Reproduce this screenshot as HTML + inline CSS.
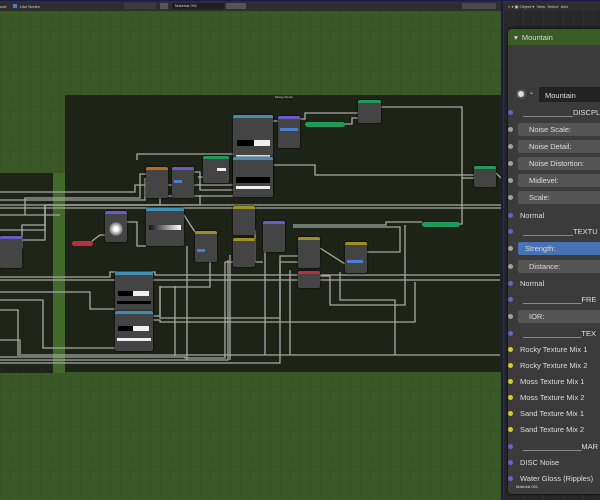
<!DOCTYPE html>
<html><head><meta charset="utf-8"><style>
*{margin:0;padding:0;box-sizing:border-box}
body{width:600px;height:500px;overflow:hidden;background:#3a5926;font-family:"Liberation Sans",sans-serif;position:relative}
.a{position:absolute}
.bg{background-image:linear-gradient(rgba(0,0,0,.05) 1px,transparent 1px),linear-gradient(90deg,rgba(0,0,0,.05) 1px,transparent 1px);background-size:10px 10px}
.n{position:absolute;background:#444;border-radius:2px;box-shadow:0 0 2px #000}
.n i{display:block;height:3px;border-radius:2px 2px 0 0}
.B{background:#3d8fb4}.P{background:#6a5bc4}.G{background:#1f9a58}.O{background:#c2691f}.Y{background:#9b9021}.R{background:#b9303c}
.pill{position:absolute;height:5px;border-radius:3px}
.top{position:absolute;left:0;top:0;width:600px;height:11px;background:#2e2e2e;border-top:1px solid #1c1c4a;font-size:4px;color:#ccc}
.row{position:absolute;left:0;width:100px;height:16px;font-size:7.5px;color:#ddd}
.sock{position:absolute;left:5px;width:5px;height:5px;border-radius:50%;top:5px}
.fld{position:absolute;left:15px;right:0;top:1px;height:13px;background:#545454;border-radius:2px 0 0 2px;padding-left:11px;line-height:13px}
.lbl{position:absolute;left:20px;top:3px;white-space:nowrap}
</style></head><body>
<div class="a bg" style="left:0;top:11px;width:501px;height:489px"></div>
<div class="a" style="left:0;top:173px;width:53px;height:200px;background:#1f2418"></div>
<div class="a" style="left:53px;top:173px;width:12px;height:200px;background:#416a2a"></div>
<div class="a" style="left:65px;top:95px;width:436px;height:277px;background:#1e2318"></div>
<div class="a" style="left:275px;top:95px;font-size:3px;color:#ccc">Mossy Rocks</div>

<svg class="a" style="left:0;top:0" width="501" height="500" fill="none" stroke="#a8a8a8" stroke-width="1.3">
<polyline points="0,192 135,192 135,185 233,185"/>
<polyline points="0,200 145,200 145,178"/>
<polyline points="25,215 25,198 140,198 140,174 146,174"/>
<polyline points="0,230 45,230 45,205 160,205 160,196 233,196"/>
<polyline points="0,248 22,248 22,225 45,225 45,205"/>
<polyline points="22,240 45,240 45,205 200,205 200,195"/>
<polyline points="137,160 137,154 233,154"/>
<polyline points="198,177 203,177"/>
<polyline points="193,172 200,172 200,190 245,190 245,180 233,180"/>
<polyline points="273,121 278,121"/>
<polyline points="273,165 315,165 315,175 474,175"/>
<polyline points="300,119 305,119 305,113 358,113"/>
<polyline points="344,124 352,124 352,118 358,118"/>
<polyline points="380,107 462,107 462,224 460,224"/>
<polyline points="462,178 474,178"/>
<polyline points="496,173 501,178"/>
<polyline points="0,205 501,205"/>
<polyline points="0,208 501,208"/>
<polyline points="92,241 100,235 105,235"/>
<polyline points="127,222 137,222 137,246 146,246"/>
<polyline points="184,215 195,232"/>
<polyline points="293,225 386,225 386,222 422,222"/>
<polyline points="293,227 400,227 400,252 367,252"/>
<polyline points="255,230 255,262 263,262"/>
<polyline points="320,248 345,264"/>
<polyline points="320,276 330,276 330,305 405,305 405,225"/>
<polyline points="0,277 110,277 110,272 155,272 155,275 500,275"/>
<polyline points="0,280 500,280"/>
<polyline points="0,292 90,292 90,309 115,309"/>
<polyline points="0,300 43,300 43,348 115,348"/>
<polyline points="0,310 18,310 18,355 500,355"/>
<polyline points="0,340 20,340 20,354"/>
<polyline points="160,286 160,318 280,318 280,256 298,256"/>
<polyline points="153,316 160,316 160,287 210,287 210,248"/>
<polyline points="175,286 175,356"/>
<polyline points="0,357 185,357 185,358 225,358 225,262 233,262"/>
<polyline points="0,360 228,360 228,260"/>
<polyline points="0,363 280,363 280,262 298,262"/>
<polyline points="187,246 187,360"/>
<polyline points="230,255 230,360"/>
<polyline points="265,250 265,355"/>
<polyline points="290,270 290,355"/>
<polyline points="340,272 340,300 395,300 395,355"/>
<polyline points="153,320 160,320 160,322 415,322 415,282"/>
<polyline points="0,215 60,215"/>
</svg>

<div class="n" style="left:233px;top:115px;width:40px;height:77px"><i class="B"></i>
<div class="a" style="left:4px;top:25px;width:17px;height:6px;background:#000"></div><div class="a" style="left:21px;top:25px;width:16px;height:6px;background:#eee"></div><div class="a" style="left:3px;top:40px;width:34px;height:3px;background:#eee"></div></div>
<div class="n" style="left:278px;top:116px;width:22px;height:32px"><i class="P"></i><div class="a" style="left:2px;top:12px;width:18px;height:3px;background:#4a7fd0"></div></div>
<div class="n" style="left:358px;top:100px;width:23px;height:23px"><i class="G"></i></div>
<div class="pill G" style="left:305px;top:122px;width:40px"></div>
<div class="n" style="left:233px;top:157px;width:40px;height:40px"><i class="B"></i>
<div class="a" style="left:3px;top:20px;width:34px;height:6px;background:#000"></div><div class="a" style="left:3px;top:29px;width:34px;height:3px;background:#eee"></div></div>
<div class="n" style="left:203px;top:156px;width:26px;height:27px"><i class="G"></i><div class="a" style="left:14px;top:12px;width:9px;height:3px;background:#eee"></div></div>
<div class="n" style="left:146px;top:167px;width:22px;height:31px"><i class="O"></i></div>
<div class="n" style="left:172px;top:167px;width:22px;height:31px"><i class="P"></i><div class="a" style="left:2px;top:13px;width:8px;height:3px;background:#4a7fd0"></div></div>
<div class="n" style="left:474px;top:166px;width:22px;height:21px"><i class="G"></i></div>
<div class="n" style="left:105px;top:211px;width:22px;height:31px"><i class="P"></i><div class="a" style="left:4px;top:11px;width:14px;height:14px;border-radius:50%;background:radial-gradient(#fff 20%,#888 60%,#444 75%)"></div></div>
<div class="n" style="left:146px;top:208px;width:38px;height:38px"><i class="B"></i><div class="a" style="left:3px;top:17px;width:32px;height:5px;background:linear-gradient(90deg,#111,#fff)"></div></div>
<div class="pill R" style="left:72px;top:241px;width:21px"></div>
<div class="n" style="left:195px;top:231px;width:22px;height:31px"><i class="Y"></i><div class="a" style="left:2px;top:18px;width:8px;height:3px;background:#4a7fd0"></div></div>
<div class="n" style="left:233px;top:206px;width:22px;height:29px"><i class="Y"></i></div>
<div class="n" style="left:233px;top:238px;width:22px;height:29px"><i class="Y"></i></div>
<div class="n" style="left:263px;top:221px;width:22px;height:31px"><i class="P"></i></div>
<div class="n" style="left:298px;top:237px;width:22px;height:31px"><i class="Y"></i></div>
<div class="n" style="left:298px;top:271px;width:22px;height:17px"><i class="R"></i></div>
<div class="n" style="left:345px;top:242px;width:22px;height:31px"><i class="Y"></i><div class="a" style="left:2px;top:18px;width:16px;height:3px;background:#4a7fd0"></div></div>
<div class="pill G" style="left:422px;top:222px;width:38px"></div>
<div class="n" style="left:115px;top:272px;width:38px;height:40px"><i class="B"></i><div class="a" style="left:3px;top:19px;width:15px;height:5px;background:#000"></div><div class="a" style="left:18px;top:19px;width:16px;height:5px;background:#eee"></div><div class="a" style="left:2px;top:29px;width:34px;height:3px;background:#000"></div></div>
<div class="n" style="left:115px;top:311px;width:38px;height:40px"><i class="B"></i><div class="a" style="left:3px;top:15px;width:15px;height:5px;background:#000"></div><div class="a" style="left:18px;top:15px;width:16px;height:5px;background:#eee"></div><div class="a" style="left:2px;top:27px;width:34px;height:3px;background:#eee"></div></div>
<div class="n" style="left:0;top:236px;width:22px;height:32px"><i class="P"></i></div>

<div class="top">
<span class="a" style="left:0;top:3px">ode</span>
<span class="a" style="left:13px;top:3px;width:4px;height:4px;background:#4a7fd0"></span>
<span class="a" style="left:20px;top:3px">Use Nodes</span>
<span class="a" style="left:124px;top:2px;width:32px;height:6px;background:#3c3c3c"></span>
<span class="a" style="left:160px;top:2px;width:8px;height:6px;background:#555"></span>
<span class="a" style="left:172px;top:2px;width:52px;height:6px;background:#1e1e1e;padding-left:3px">Material.001</span>
<span class="a" style="left:226px;top:2px;width:20px;height:6px;background:#555"></span>
<span class="a" style="left:462px;top:2px;width:34px;height:6px;background:#4a4a4a"></span>
<span class="a" style="left:508px;top:3px">◐ ▾ ▣ Object ▾ &nbsp;View &nbsp;Select &nbsp;Add</span>
</div>

<div class="a" style="left:501px;top:0;width:2px;height:500px;background:#1c1c4a"></div>
<div class="a" style="left:503px;top:11px;width:97px;height:489px;background:#282828;background-image:linear-gradient(90deg,rgba(255,255,255,.04) 1px,transparent 1px);background-size:10px 10px"></div>
<div class="a" style="left:508px;top:29px;width:92px;height:465px;background:#3b3b3b;border-radius:4px 0 0 4px;box-shadow:0 0 3px #000;overflow:hidden;font-size:7.5px;color:#ddd">
<div class="a" style="left:0;top:0;width:100px;height:16px;background:#3a5a26;padding:4px 0 0 6px">▾ &nbsp;Mountain</div>
<div class="a" style="left:8px;top:60px;width:10px;height:10px;border-radius:50%;background:#ddd;border:2px solid #555"></div>
<div class="a" style="left:21px;top:60px;font-size:6px">⌄</div>
<div class="a" style="left:31px;top:58px;width:70px;height:15px;background:#222;padding:4px 0 0 6px">Mountain</div>
</div>
<div class="a" style="left:503px;top:0;width:97px;height:500px">
<div class="row" style="top:105px"><span class="sock" style="background:#6363c8"></span><span class="lbl" style="left:20px">____________DISCPL</span></div>
<div class="row" style="top:122px"><span class="sock" style="background:#a1a1a1"></span><div class="fld">Noise Scale:</div></div>
<div class="row" style="top:139px"><span class="sock" style="background:#a1a1a1"></span><div class="fld">Noise Detail:</div></div>
<div class="row" style="top:156px"><span class="sock" style="background:#a1a1a1"></span><div class="fld">Noise Distortion:</div></div>
<div class="row" style="top:173px"><span class="sock" style="background:#a1a1a1"></span><div class="fld">Midlevel:</div></div>
<div class="row" style="top:190px"><span class="sock" style="background:#a1a1a1"></span><div class="fld">Scale:</div></div>
<div class="row" style="top:208px"><span class="sock" style="background:#6363c8"></span><span class="lbl" style="left:17px">Normal</span></div>
<div class="row" style="top:224px"><span class="sock" style="background:#6363c8"></span><span class="lbl" style="left:20px">____________TEXTU</span></div>
<div class="row" style="top:241px"><span class="sock" style="background:#a1a1a1"></span><div class="fld" style="background:#4772b3;padding-left:7px">Strength:</div></div>
<div class="row" style="top:259px"><span class="sock" style="background:#a1a1a1"></span><div class="fld">Distance:</div></div>
<div class="row" style="top:276px"><span class="sock" style="background:#6363c8"></span><span class="lbl" style="left:17px">Normal</span></div>
<div class="row" style="top:292px"><span class="sock" style="background:#6363c8"></span><span class="lbl" style="left:20px">______________FRE</span></div>
<div class="row" style="top:309px"><span class="sock" style="background:#a1a1a1"></span><div class="fld">IOR:</div></div>
<div class="row" style="top:326px"><span class="sock" style="background:#6363c8"></span><span class="lbl" style="left:20px">______________TEX</span></div>
<div class="row" style="top:342px"><span class="sock" style="background:#d6c92a"></span><span class="lbl" style="left:17px">Rocky Texture Mix 1</span></div>
<div class="row" style="top:358px"><span class="sock" style="background:#d6c92a"></span><span class="lbl" style="left:17px">Rocky Texture Mix 2</span></div>
<div class="row" style="top:374px"><span class="sock" style="background:#d6c92a"></span><span class="lbl" style="left:17px">Moss Texture Mix 1</span></div>
<div class="row" style="top:390px"><span class="sock" style="background:#d6c92a"></span><span class="lbl" style="left:17px">Moss Texture Mix 2</span></div>
<div class="row" style="top:406px"><span class="sock" style="background:#d6c92a"></span><span class="lbl" style="left:17px">Sand Texture Mix 1</span></div>
<div class="row" style="top:422px"><span class="sock" style="background:#d6c92a"></span><span class="lbl" style="left:17px">Sand Texture Mix 2</span></div>
<div class="row" style="top:439px"><span class="sock" style="background:#6363c8"></span><span class="lbl" style="left:20px">______________MAR</span></div>
<div class="row" style="top:455px"><span class="sock" style="background:#6363c8"></span><span class="lbl" style="left:17px">DISC Noise</span></div>
<div class="row" style="top:471px"><span class="sock" style="background:#6363c8"></span><span class="lbl" style="left:17px">Water Gloss (Ripples)</span></div>
<div class="a" style="left:13px;top:484px;font-size:4px;color:#ddd">Material.001</div>
</div>
</body></html>
